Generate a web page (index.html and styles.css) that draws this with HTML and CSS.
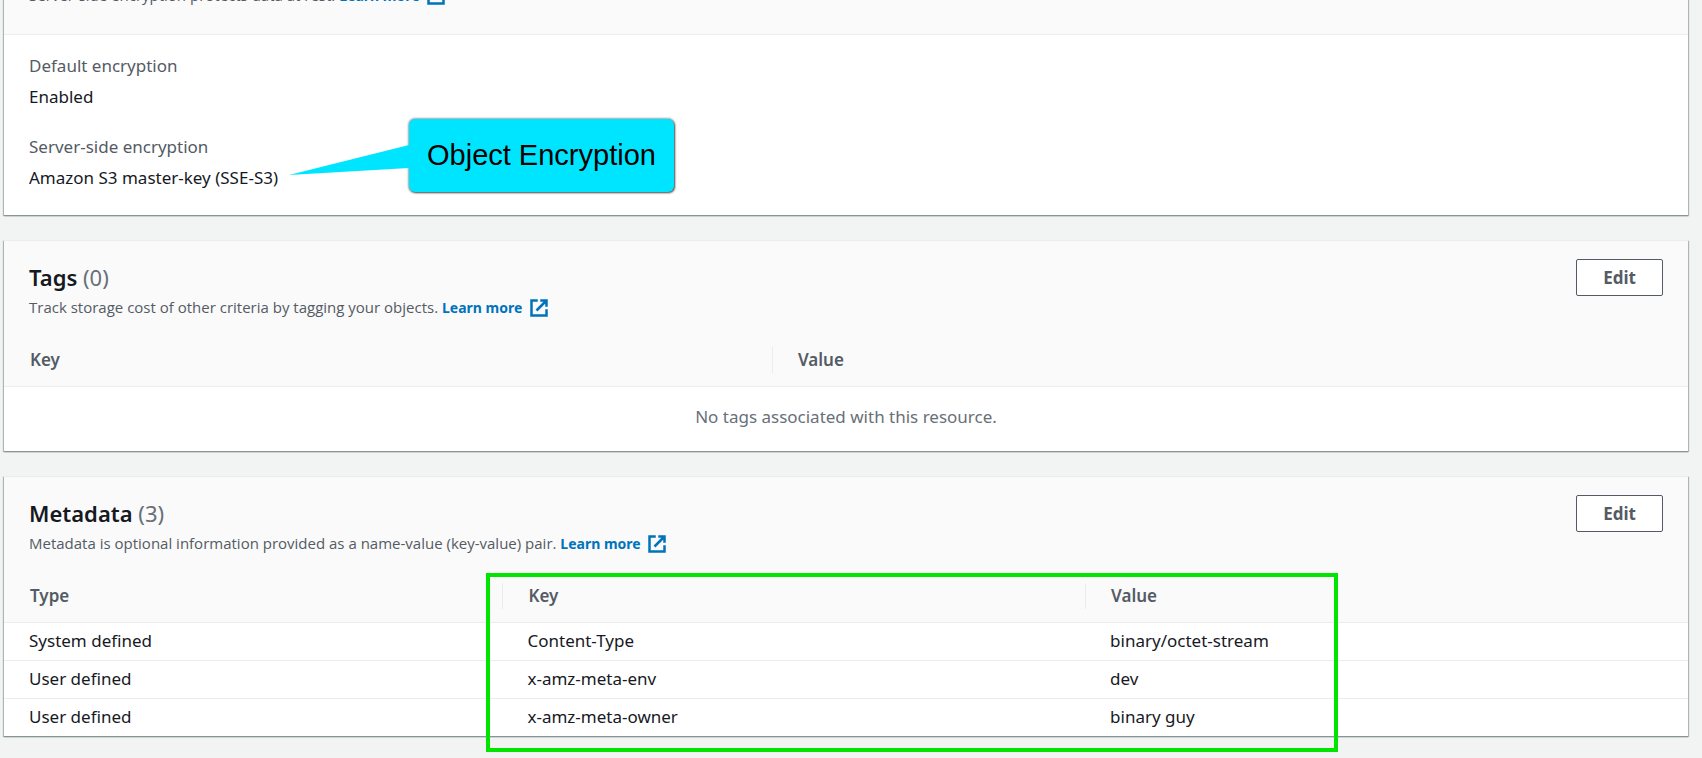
FILE: index.html
```html
<!DOCTYPE html>
<html lang="en">
<head>
  <meta charset="UTF-8">
  <meta name="viewport" content="width=device-width, initial-scale=1.0">
  <title>Object properties</title>
  <link rel="stylesheet" href="styles.css">
</head>
<body>
  <svg class="sprite" aria-hidden="true">
    <symbol id="icon-external" viewBox="0 0 16 16">
      <path d="M9 2h5v5M6 10l8-8M14 9v5H2V2h5" fill="none" stroke="currentColor" stroke-width="2"/>
    </symbol>
  </svg>

  <main class="page">
    <!-- Encryption -->
    <section class="card card-encryption">
      <div class="card-header">
        <p class="description">Server-side encryption protects data at rest.
          <a class="link" href="#">Learn more <svg class="icon"><use href="#icon-external"/></svg></a></p>
      </div>
      <dl class="details">
        <div class="pair">
          <dt>Default encryption</dt>
          <dd>Enabled</dd>
        </div>
        <div class="pair">
          <dt>Server-side encryption</dt>
          <dd>Amazon S3 master-key (SSE-S3)</dd>
        </div>
      </dl>
      <div class="callout">
        <svg class="callout-tail" viewBox="0 0 120 31"><path d="M0 30L120 0V23z" fill="#00e5ff"/></svg>
        Object Encryption
      </div>
    </section>

    <!-- Tags -->
    <section class="card">
      <div class="card-header">
        <div>
          <h2>Tags <span class="counter">(0)</span></h2>
          <p class="description">Track storage cost of other criteria by tagging your objects.
            <a class="link" href="#">Learn more <svg class="icon"><use href="#icon-external"/></svg></a></p>
        </div>
        <button class="button" type="button">Edit</button>
      </div>
      <table class="table table-tags">
        <thead>
          <tr>
            <th><div>Key</div></th>
            <th><div>Value</div></th>
          </tr>
        </thead>
        <tbody>
          <tr>
            <td class="empty" colspan="2">No tags associated with this resource.</td>
          </tr>
        </tbody>
      </table>
    </section>

    <!-- Metadata -->
    <section class="card">
      <div class="card-header">
        <div>
          <h2>Metadata <span class="counter">(3)</span></h2>
          <p class="description">Metadata is optional information provided as a name-value (key-value) pair.
            <a class="link" href="#">Learn more <svg class="icon"><use href="#icon-external"/></svg></a></p>
        </div>
        <button class="button" type="button">Edit</button>
      </div>
      <table class="table table-metadata">
        <thead>
          <tr>
            <th><div>Type</div></th>
            <th><div>Key</div></th>
            <th><div>Value</div></th>
          </tr>
        </thead>
        <tbody>
          <tr>
            <td>System defined</td>
            <td>Content-Type</td>
            <td>binary/octet-stream</td>
          </tr>
          <tr>
            <td>User defined</td>
            <td>x-amz-meta-env</td>
            <td>dev</td>
          </tr>
          <tr>
            <td>User defined</td>
            <td>x-amz-meta-owner</td>
            <td>binary guy</td>
          </tr>
        </tbody>
      </table>
      <div class="highlight"></div>
    </section>
  </main>
</body>
</html>
```
FILE: styles.css
```css
* {
  box-sizing: border-box;
}

body {
  margin: 0;
  background: #f2f3f3;
  color: #16191f;
  font-family: 'Noto Sans', 'Open Sans', sans-serif;
  font-size: 17px;
  line-height: 26px;
  overflow: hidden;
}

h2,
p,
dl,
dd {
  margin: 0;
}

.sprite {
  display: none;
}

.page {
  display: flex;
  flex-direction: column;
  gap: 25px;
  padding: 0 14px 20px 4px;
}

.card {
  position: relative;
  background: #fff;
  border-top: 1px solid #eaeded;
  box-shadow: 0 1px 1px 0 #879596, 1px 1px 1px 0 rgba(0, 28, 36, 0.25), -1px 1px 1px 0 rgba(0, 28, 36, 0.25);
}

/* scrolled partly out of view */
.card-encryption {
  margin-top: -39px;
}

.card-header {
  display: flex;
  justify-content: space-between;
  align-items: flex-start;
  padding: 18px 25px 15px;
  background: #fafafa;
}

.card-encryption .card-header {
  padding-bottom: 27px;
  border-bottom: 1px solid #eaeded;
}

h2 {
  padding-top: 3px;
  font-size: 22px;
  line-height: 30px;
  font-weight: 600;
}

.counter {
  color: #687078;
  font-weight: 400;
}

.description {
  padding-top: 3px;
  color: #545b64;
  font-family: 'Open Sans', 'Noto Sans', sans-serif;
  font-size: 15px;
  line-height: 24px;
}

.link {
  color: #0073bb;
  font-family: 'Noto Sans', 'Open Sans', sans-serif;
  font-size: 14px;
  font-weight: 700;
  line-height: 20px;
  text-decoration: none;
}

.icon {
  width: 20px;
  height: 20px;
  margin-left: 3px;
  vertical-align: -5px;
}

.button {
  width: 87px;
  height: 37px;
  padding: 0;
  background: #fff;
  border: 1px solid #545b64;
  border-radius: 2px;
  color: #545b64;
  font: inherit;
  font-weight: 700;
}

.details {
  display: flex;
  flex-direction: column;
  gap: 24px;
  padding: 18px 25px 24px;
}

.pair {
  display: flex;
  flex-direction: column;
  gap: 5px;
}

.pair dt {
  color: #545b64;
}

.table {
  width: 100%;
  border-collapse: collapse;
  table-layout: fixed;
}

.table th {
  padding: 13px 0;
  background: #fafafa;
  border-bottom: 1px solid #eaeded;
  color: #545b64;
  font-weight: 600;
  text-align: left;
}

.table th div {
  padding-left: 26px;
}

.table th + th div {
  padding-left: 25px;
  border-left: 1px solid #eaeded;
}

.table td {
  padding: 5px 25px 6px;
  border-bottom: 1px solid #eaeded;
}

.table tbody tr:last-child td {
  border-bottom: 0;
}

.table .empty {
  padding: 17px 25px 21px;
  color: #687078;
  text-align: center;
}

.table-tags th:first-child {
  width: 45.6%;
}

.table-metadata th:first-child {
  width: 29.6%;
}

.table-metadata th:nth-child(2) {
  width: 34.6%;
}

/* Annotations */
.callout {
  position: absolute;
  top: 157px;
  left: 405px;
  padding: 20px 18px;
  background: #00e5ff;
  border-radius: 6px;
  box-shadow: 0 0 2px 1px rgba(0, 0, 0, 0.35), 1px 1px 2px rgba(0, 0, 0, 0.5);
  color: #000;
  font-family: 'Liberation Sans', Arial, sans-serif;
  font-size: 29px;
  line-height: 33px;
  white-space: nowrap;
}

.callout-tail {
  position: absolute;
  top: 26px;
  right: 100%;
  width: 120px;
  height: 31px;
}

.highlight {
  position: absolute;
  top: 96px;
  bottom: -16px;
  left: 28.6%;
  width: 50.6%;
  border: 4px solid #00e400;
  pointer-events: none;
}
```
